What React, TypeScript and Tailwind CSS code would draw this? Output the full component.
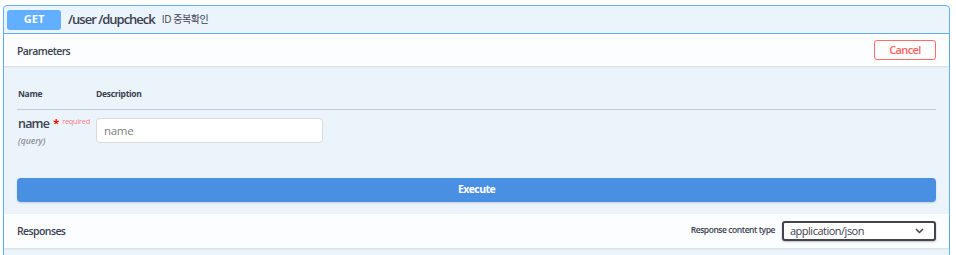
import React from 'react';

const App: React.FC = () => {
  return (
    <div className="w-[956px] h-[255px] bg-white overflow-hidden pt-[5px] pl-[3px]" style={{ fontFamily: '"Open Sans", "Noto Sans CJK KR", sans-serif' }}>
      <div className="w-[947px] h-[260px] border border-[#61affe] rounded-[4px] bg-[#ebf3fb]">
        {/* Summary bar */}
        <div className="h-[28px] flex items-center px-[3px] border-b border-[#61affe]">
          <span className="w-[54px] h-[20px] rounded-[3px] bg-[#61affe] text-white text-[11px] font-bold flex items-center justify-center">
            GET
          </span>
          <span className="ml-[7px] text-[13px] font-semibold text-[#3b4151] tracking-[-1px]">/user /dupcheck</span>
          <span className="ml-[7px] text-[10px] text-[#3b4151] tracking-[-0.4px]">ID&nbsp;중복확인</span>
        </div>

        {/* Parameters header */}
        <div className="h-[32px] flex items-center justify-between pl-[13px] pr-[13px] bg-[#fbfdff] shadow-[0_1px_2px_rgba(0,0,0,0.1)]">
          <span className="pt-[3px] text-[10.5px] font-semibold text-[#3b4151] tracking-[-0.6px]">Parameters</span>
          <button className="w-[62px] h-[20px] rounded-[3px] border-[1.5px] border-[#ff6b6b] text-[#ff6060] text-[11px] font-semibold tracking-[-0.6px] flex items-center justify-center">
            Cancel
          </button>
        </div>

        {/* Parameters table */}
        <div className="px-[13px] pt-[25px]">
          <div className="flex items-end h-[19px] border-b border-[#c5cbd3] text-[8.5px] font-bold text-[#3b4151] tracking-[-0.3px] pb-[8px]">
            <span className="w-[79px] pl-[1px]">Name</span>
            <span>Description</span>
          </div>
          <div className="flex pt-[5px]">
            <div className="w-[79px] pl-[1px] pt-[2px]">
              <div className="flex items-start">
                <span className="text-[12.5px] font-semibold text-[#3b4151] leading-[14px] tracking-[-0.8px]">name</span>
                <span className="ml-[4px] text-[#ff0000] text-[11px] leading-[12px] font-bold">*</span>
                <span className="ml-[3px] text-[#ff8080] text-[7.5px] leading-[9px] tracking-[-0.3px]">required</span>
              </div>
              <div className="text-[8.5px] italic font-semibold text-[#8b8f99] mt-[4px]">(query)</div>
            </div>
            <div className="pt-[3px]">
              <div className="w-[227px] h-[25px] bg-white border border-[#d9d9d9] rounded-[4px] flex items-center pl-[7px] text-[11.5px] text-[#808080] tracking-[-0.3px]">
                name
              </div>
            </div>
          </div>
          <button className="mt-[30px] w-full h-[24px] rounded-[4px] bg-[#4990e2] text-white text-[10.5px] font-bold tracking-[-0.6px] flex items-center justify-center shadow-[0_1px_2px_rgba(0,0,0,0.15)]">
            Execute
          </button>
        </div>

        {/* Responses header */}
        <div className="mt-[12px] h-[34px] flex items-center justify-between pl-[13px] pr-[13px] bg-[#fbfdff] shadow-[0_1px_2px_rgba(0,0,0,0.1)]">
          <span className="pt-[3px] text-[10.5px] font-semibold text-[#3b4151] tracking-[-0.6px]">Responses</span>
          <div className="flex items-center">
            <span className="text-[8.5px] font-semibold text-[#3b4151] tracking-[-0.45px] mr-[7px]">Response content type</span>
            <div className="w-[154px] h-[20px] rounded-[3px] border-2 border-[#41444e] bg-white flex items-center justify-between pl-[6px] pr-[10px] shadow-[0_1px_2px_rgba(0,0,0,0.25)]">
              <span className="text-[11px] text-[#3b4151] tracking-[-0.5px]">application/json</span>
              <svg width="9" height="6" viewBox="0 0 9 6">
                <path d="M1 1l3.5 3.5L8 1" fill="none" stroke="#3b4151" strokeWidth="1.5" />
              </svg>
            </div>
          </div>
        </div>
      </div>
    </div>
  );
};

export default App;
